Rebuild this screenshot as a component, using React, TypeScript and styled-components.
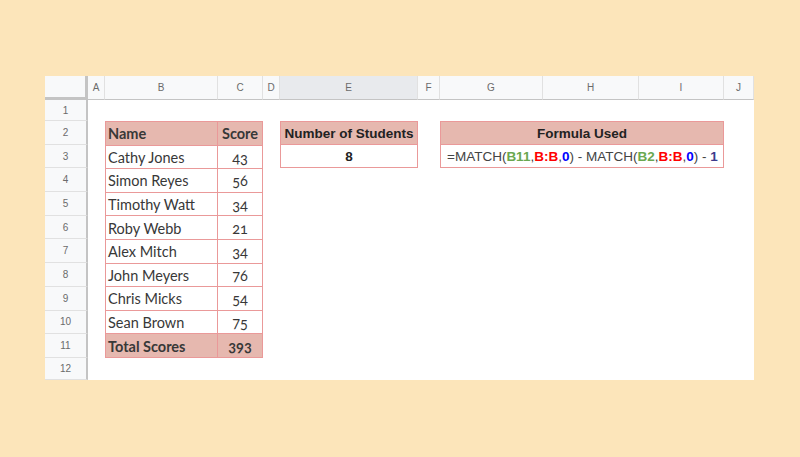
import React from 'react';
import styled, { createGlobalStyle } from 'styled-components';

const GlobalStyle = createGlobalStyle`
  html, body {
    margin: 0;
    padding: 0;
    background: #fce5ba;
  }
`;

const Page = styled.div`
  width: 800px;
  height: 457px;
  padding: 76px 0 0 45px;
  box-sizing: border-box;
  background: #fce5ba;
`;

const COLS = [
  { name: 'A', w: 17 },
  { name: 'B', w: 113 },
  { name: 'C', w: 45 },
  { name: 'D', w: 17 },
  { name: 'E', w: 138 },
  { name: 'F', w: 22 },
  { name: 'G', w: 103 },
  { name: 'H', w: 96 },
  { name: 'I', w: 85 },
  { name: 'J', w: 30 },
];

const Sheet = styled.div`
  width: 709px;
  height: 304px;
  background: #fff;
  display: grid;
  grid-template-columns: 43px ${COLS.map((c) => c.w + 'px').join(' ')};
  grid-template-rows: 24px 21px repeat(10, 23.7px) 22px;
  font-family: 'Liberation Sans', Arial, sans-serif;
`;

const Corner = styled.div`
  grid-column: 1;
  grid-row: 1;
  background: #f8f9fa;
  border-right: 3px solid #c4c4c4;
  border-bottom: 3px solid #c4c4c4;
  box-sizing: border-box;
`;

const ColHead = styled.div<{ $active?: boolean }>`
  grid-row: 1;
  background: ${(p) => (p.$active ? '#e8eaed' : '#f8f9fa')};
  border-right: 1px solid #e1e1e1;
  border-bottom: 1px solid #c4c4c4;
  box-sizing: border-box;
  display: flex;
  align-items: center;
  justify-content: center;
  font-size: 10px;
  color: #6b6b6b;
`;

const RowHead = styled.div`
  grid-column: 1;
  background: #f8f9fa;
  border-right: 2px solid #c4c4c4;
  border-bottom: 1px solid #e1e1e1;
  box-sizing: border-box;
  display: flex;
  align-items: center;
  justify-content: center;
  font-size: 10px;
  color: #6b6b6b;
`;

const Table = styled.div<{ $col: string; $row: string; $cols: string; $rows: string }>`
  grid-column: ${(p) => p.$col};
  grid-row: ${(p) => p.$row};
  display: grid;
  grid-template-columns: ${(p) => p.$cols};
  grid-template-rows: ${(p) => p.$rows};
  border-left: 1px solid #ea9999;
  border-top: 1px solid #ea9999;
  box-sizing: border-box;
`;

const Cell = styled.div<{ $head?: boolean; $align?: 'left' | 'center'; $bold?: boolean }>`
  border-right: 1px solid #ea9999;
  border-bottom: 1px solid #ea9999;
  background: ${(p) => (p.$head ? '#e6b8af' : '#fff')};
  display: flex;
  align-items: center;
  justify-content: ${(p) => (p.$align === 'center' ? 'center' : 'flex-start')};
  padding: 1px 2px 0;
  box-sizing: border-box;
  font-weight: ${(p) => (p.$bold || p.$head ? 700 : 400)};
  color: #222;
  white-space: pre;
  overflow: hidden;
`;

const ScoreCell = styled(Cell)`
  font-family: Lato, 'Open Sans', sans-serif;
  font-size: 14.5px;
  font-variant-numeric: oldstyle-nums;
  font-feature-settings: 'onum' 1;
  color: #383838;
`;

const ArialCell = styled(Cell)`
  font-family: 'Liberation Sans', Arial, sans-serif;
  font-size: 13.5px;
  color: #222;
`;

const Formula = styled(ArialCell)`
  color: #444;
  padding-left: 6px;
`;

const Ref = styled.span<{ $c: string }>`
  color: ${(p) => p.$c};
  font-weight: 700;
`;

const scores: [string, number][] = [
  ['Cathy Jones', 43],
  ['Simon Reyes', 56],
  ['Timothy Watt', 34],
  ['Roby Webb', 21],
  ['Alex Mitch', 34],
  ['John Meyers', 76],
  ['Chris Micks', 54],
  ['Sean Brown', 75],
];

const GREEN = '#6aa84f';
const RED = '#ff0000';
const BLUE = '#0000ff';

export default function App() {
  const total = scores.reduce((s, r) => s + r[1], 0);
  return (
    <Page>
      <GlobalStyle />
      <Sheet>
        <Corner />
        {COLS.map((c, i) => (
          <ColHead key={c.name} $active={c.name === 'E'} style={{ gridColumn: i + 2 }}>
            {c.name}
          </ColHead>
        ))}
        {Array.from({ length: 12 }, (_, i) => (
          <RowHead key={i} style={{ gridRow: i + 2 }}>
            {i + 1}
          </RowHead>
        ))}

        <Table $col="3 / 5" $row="3 / 13" $cols="112px 45px" $rows="repeat(10, 1fr)">
          <ScoreCell $head>Name</ScoreCell>
          <ScoreCell $head $align="center">Score</ScoreCell>
          {scores.map(([n, s]) => (
            <React.Fragment key={n}>
              <ScoreCell>{n}</ScoreCell>
              <ScoreCell $align="center">{s}</ScoreCell>
            </React.Fragment>
          ))}
          <ScoreCell $head>Total Scores</ScoreCell>
          <ScoreCell $head $align="center">{total}</ScoreCell>
        </Table>

        <Table $col="6" $row="3 / 5" $cols="1fr" $rows="1fr 1fr">
          <ArialCell $head $align="center">Number of Students</ArialCell>
          <ArialCell $bold $align="center">8</ArialCell>
        </Table>

        <Table $col="8 / 11" $row="3 / 5" $cols="1fr" $rows="1fr 1fr">
          <ArialCell $head $align="center">Formula Used</ArialCell>
          <Formula>
            {'=MATCH('}
            <Ref $c={GREEN}>B11</Ref>,<Ref $c={RED}>B:B</Ref>,<Ref $c={BLUE}>0</Ref>
            {') - MATCH('}
            <Ref $c={GREEN}>B2</Ref>,<Ref $c={RED}>B:B</Ref>,<Ref $c={BLUE}>0</Ref>
            {') - '}
            <Ref $c="#3d3a8c">1</Ref>
          </Formula>
        </Table>
      </Sheet>
    </Page>
  );
}
